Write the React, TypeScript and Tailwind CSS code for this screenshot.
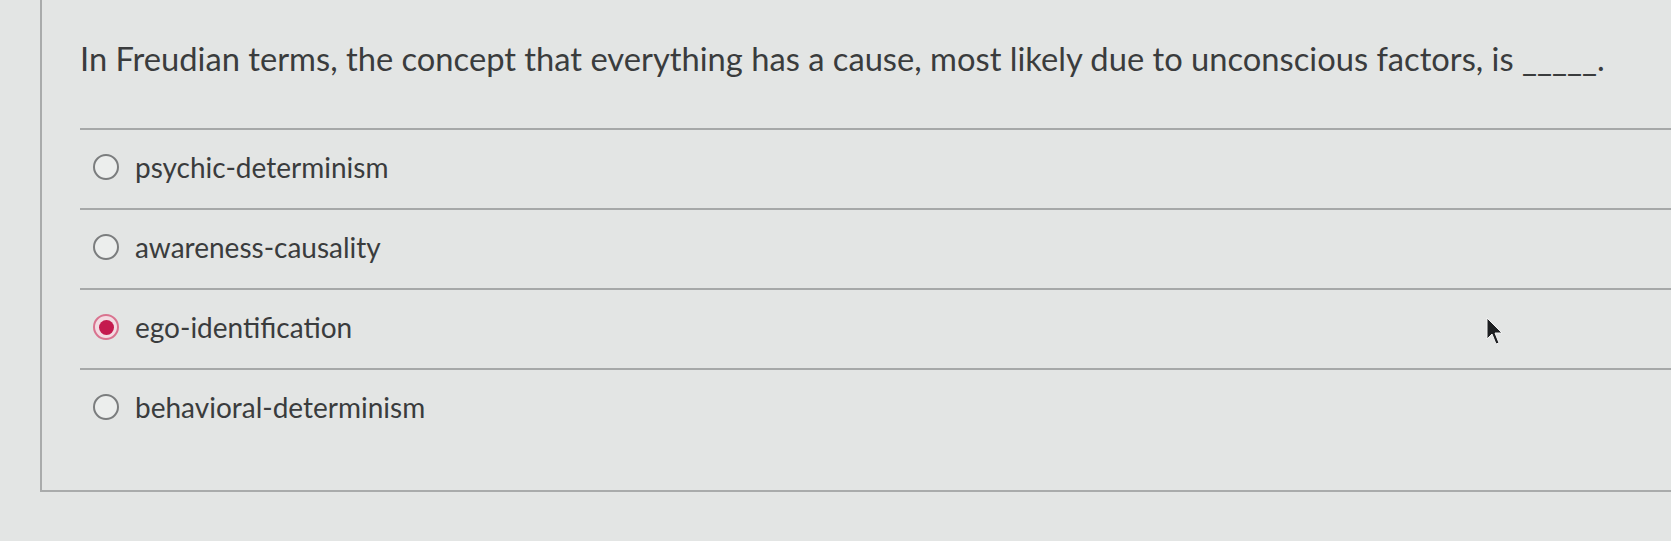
import { useState } from "react";

const options = [
  "psychic-determinism",
  "awareness-causality",
  "ego-identification",
  "behavioral-determinism",
];

function Radio({ checked }: { checked: boolean }) {
  if (checked) {
    return (
      <span className="flex h-[26px] w-[26px] shrink-0 items-center justify-center rounded-full border-[2px] border-[#d9738f] bg-[#f3dbe2]">
        <span className="h-[15px] w-[15px] rounded-full bg-[#c41a4e]" />
      </span>
    );
  }
  return <span className="h-[26px] w-[26px] shrink-0 rounded-full border-[2px] border-[#7b7d7e] bg-[#eceeed]" />;
}

export default function App() {
  const [selected, setSelected] = useState(2);

  return (
    <div
      className="relative h-[541px] w-full overflow-hidden bg-[#e3e5e4] text-[#3a3c3d]"
      style={{ fontFamily: "Lato, 'Open Sans', sans-serif" }}
    >
      <div className="ml-[40px] h-[492px] border-b-[2px] border-l-[2px] border-[#a9abab] pl-[38px]">
        <p className="pt-[39px] pb-[49px] text-[32.7px] leading-[40px]">
          In Freudian terms, the concept that everything has a cause, most likely due to unconscious factors, is _____.
        </p>
        <div>
          {options.map((opt, i) => (
            <label
              key={opt}
              onClick={() => setSelected(i)}
              className="flex h-[80px] cursor-pointer items-start gap-[16px] border-t-[2px] border-[#a6a8a8] pt-[21px] pl-[13px]"
            >
              <span className="flex h-[32px] items-center">
                <Radio checked={selected === i} />
              </span>
              <span className="text-[28px] leading-[32px]">{opt}</span>
            </label>
          ))}
        </div>
      </div>

      <svg
        className="absolute left-[1485px] top-[317px]"
        width="20"
        height="30"
        viewBox="0 0 20 30"
      >
        <path
          d="M2 1 L2 22 L7 17 L11 27 L14 26 L10 16 L17 16 Z"
          fill="#1d1f21"
          stroke="#f2f2f2"
          strokeWidth="1"
        />
      </svg>
    </div>
  );
}
